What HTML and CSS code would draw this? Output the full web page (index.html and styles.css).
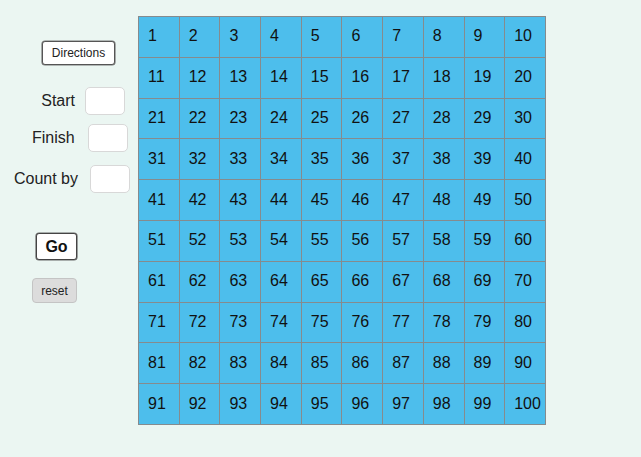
FILE: index.html
```html
<!DOCTYPE html>
<html>
<head>
<meta charset="utf-8">
<link rel="stylesheet" href="styles.css">
</head>
<body>
<div class="app">
  <div class="panel">
    <button class="btn btn-directions">Directions</button>
    <div class="field field-start"><span class="label">Start</span><input class="box" type="text"></div>
    <div class="field field-finish"><span class="label">Finish</span><input class="box" type="text"></div>
    <div class="field field-count"><span class="label">Count by</span><input class="box" type="text"></div>
    <button class="btn btn-go">Go</button>
    <button class="btn btn-reset">reset</button>
  </div>
  <div class="board" id="board"></div>
</div>
<script>
var b = document.getElementById('board');
for (var i = 1; i <= 100; i++) {
  var c = document.createElement('div');
  c.className = 'cell';
  c.textContent = i;
  b.appendChild(c);
}
</script>
</body>
</html>
```
FILE: styles.css
```css
html, body {
  margin: 0;
  padding: 0;
}
body {
  background: #ebf6f2;
  width: 641px;
  height: 457px;
  overflow: hidden;
  font-family: "Liberation Sans", Arial, sans-serif;
  color: #111;
}
.app {
  display: flex;
  align-items: flex-start;
}
.panel {
  width: 138px;
  flex-shrink: 0;
  display: flex;
  flex-direction: column;
  align-items: flex-start;
}
.btn {
  font-family: "Liberation Sans", Arial, sans-serif;
  padding: 0;
  box-sizing: border-box;
  cursor: pointer;
}
.btn-directions {
  margin: 41px 0 0 42px;
  width: 73px;
  height: 24px;
  font-size: 12px;
  background: #fff;
  border: 1px solid #555;
  border-radius: 3px;
  box-shadow: 0 0 0 0.6px #777;
  color: #222;
}
.field {
  display: flex;
  align-items: center;
  white-space: nowrap;
}
.label {
  font-size: 16px;
  color: #222;
  text-align: right;
  flex-shrink: 0;
  white-space: nowrap;
}
.box {
  box-sizing: border-box;
  width: 40px;
  height: 28px;
  flex-shrink: 0;
  background: #fff;
  border: 1.5px solid #d8d8d8;
  border-radius: 5px;
  padding: 0;
  margin: 0;
}
.field-start { margin: 22px 0 0 41px; }
.field-start .label { width: 34px; margin-right: 10px; }
.field-finish { margin: 9px 0 0 32px; }
.field-finish .label { width: 42px; margin-right: 14px; }
.field-count { margin: 13px 0 0 12px; }
.field-count .label { width: 66px; margin-right: 12px; }
.btn-go {
  margin: 40px 0 0 36px;
  width: 41px;
  height: 27px;
  font-size: 16px;
  font-weight: bold;
  background: #fff;
  border: 1px solid #444;
  box-shadow: 0 0 0 0.6px #666;
  border-radius: 3px;
  color: #111;
}
.btn-reset {
  margin: 18px 0 0 32px;
  width: 45px;
  height: 25px;
  font-size: 12px;
  background: #dcdcdc;
  border: 1px solid #c4c4c4;
  border-radius: 4px;
  color: #222;
}
.board {
  margin-top: 16px;
  display: grid;
  grid-template-columns: repeat(10, 39.7px);
  grid-auto-rows: 39.8px;
  gap: 1px;
  padding: 1px;
  background: #858b8e;
}
.cell {
  background: #4dbeec;
  font-size: 16px;
  color: #111;
  display: flex;
  align-items: center;
  padding-left: 9px;
  padding-bottom: 1px;
  box-sizing: border-box;
}
```
